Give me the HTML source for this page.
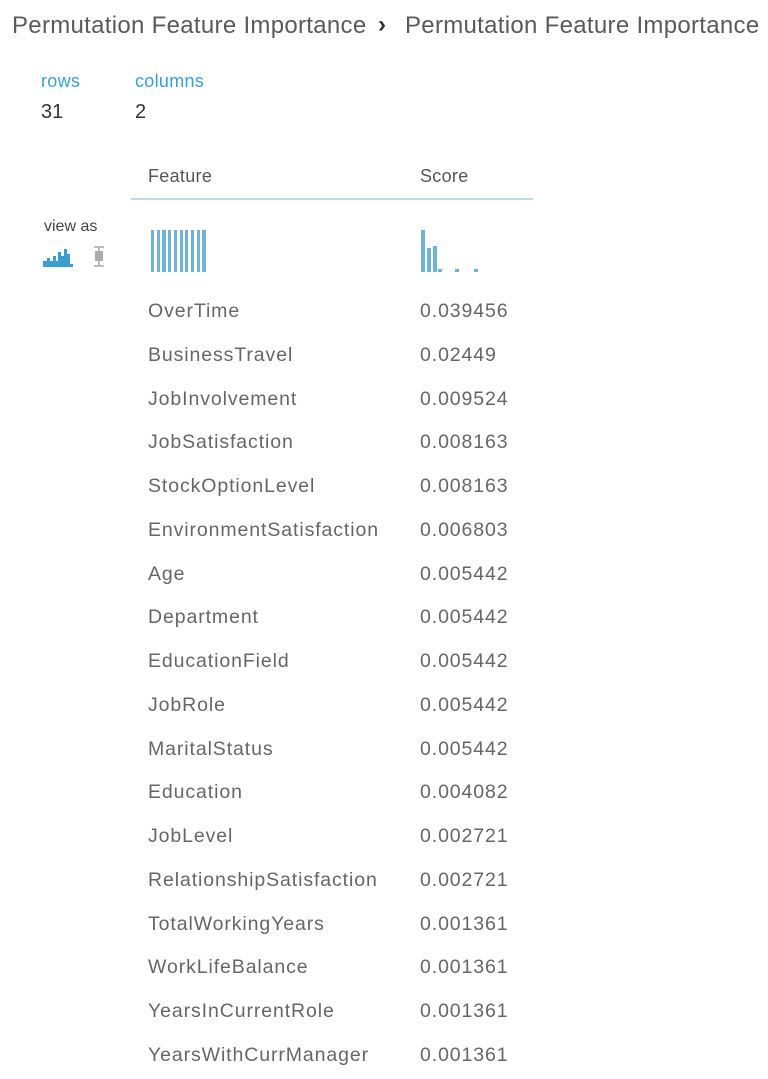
<!DOCTYPE html>
<html><head><meta charset="utf-8"><style>
body{margin:0;width:768px;height:1079px;background:#fff;font-family:"Liberation Sans",sans-serif;position:relative;overflow:hidden}
.a{position:absolute;white-space:nowrap}
.t{font-size:24px;color:#5a5a5a;top:12px;letter-spacing:0.3px}
.lb{color:#3a9fd0;font-size:18px;top:71px;letter-spacing:0.3px}
.v{color:#333;font-size:20px;top:101px}
.h{font-size:18px;color:#555;top:166px;letter-spacing:0.3px}
.r{font-size:19.5px;color:#666;letter-spacing:0.9px}
.bar{position:absolute;background:#6fb3d8}
</style></head><body>
<div class="a t" style="left:12px">Permutation Feature Importance</div>
<div class="a" style="left:378px;top:11px;font-size:24px;color:#333;font-weight:bold">›</div>
<div class="a t" style="left:405px">Permutation Feature Importance</div>
<div class="a lb" style="left:41px">rows</div>
<div class="a lb" style="left:135px">columns</div>
<div class="a v" style="left:41px">31</div>
<div class="a v" style="left:135px">2</div>
<div class="a h" style="left:148px">Feature</div>
<div class="a h" style="left:420px">Score</div>
<div class="a" style="left:131px;top:198px;width:402px;height:2px;background:#b8dcea"></div>
<div class="a" style="left:44px;top:218px;font-size:16px;color:#444">view as</div>
<svg class="a" style="left:43px;top:249px" width="32" height="18"><path d="M0 12h4v-3h3v3h3v-5h3v5h2v-9h3v4h3v-7h3v5h3v10h3v5H0z" fill="#3a9fd0"/></svg>
<svg class="a" style="left:92px;top:245px" width="14" height="24"><path d="M2 2h10M7 2v4M7 16v5M2 21h10" stroke="#aaa" stroke-width="1.5" fill="none"/><rect x="3" y="6" width="8" height="10" fill="#aaa"/></svg>
<div id="h1"></div>
<script>
var s='';for(var i=0;i<10;i++){s+='<div class="bar" style="left:'+(151+i*5.7)+'px;top:230px;width:3.3px;height:42px"></div>'}
s+='<div class="bar" style="left:421px;top:230px;width:3.5px;height:42px"></div>';
s+='<div class="bar" style="left:427px;top:248px;width:3.5px;height:24px"></div>';
s+='<div class="bar" style="left:433px;top:246px;width:3.5px;height:26px"></div>';
s+='<div class="bar" style="left:438px;top:269px;width:3.5px;height:3px"></div>';
s+='<div class="bar" style="left:455px;top:269px;width:3.5px;height:3px"></div>';
s+='<div class="bar" style="left:474px;top:269px;width:3.5px;height:3px"></div>';
var d=[["OverTime","0.039456"],["BusinessTravel","0.02449"],["JobInvolvement","0.009524"],["JobSatisfaction","0.008163"],["StockOptionLevel","0.008163"],["EnvironmentSatisfaction","0.006803"],["Age","0.005442"],["Department","0.005442"],["EducationField","0.005442"],["JobRole","0.005442"],["MaritalStatus","0.005442"],["Education","0.004082"],["JobLevel","0.002721"],["RelationshipSatisfaction","0.002721"],["TotalWorkingYears","0.001361"],["WorkLifeBalance","0.001361"],["YearsInCurrentRole","0.001361"],["YearsWithCurrManager","0.001361"]];
for(var i=0;i<d.length;i++){var y=300+i*43.76;s+='<div class="a r" style="left:148px;top:'+y+'px">'+d[i][0]+'</div><div class="a r" style="left:420px;top:'+y+'px">'+d[i][1]+'</div>'}
document.getElementById('h1').outerHTML=s;
</script>
</body></html>
